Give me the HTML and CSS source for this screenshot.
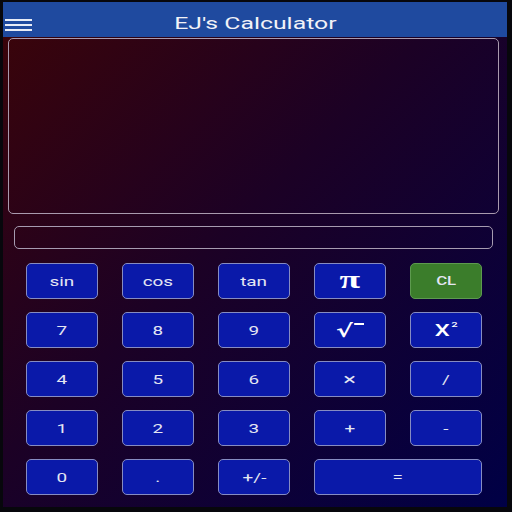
FILE: index.html
```html
<!DOCTYPE html>
<html lang="en">
<head>
  <meta charset="UTF-8">
  <meta name="viewport" content="width=device-width, initial-scale=1.0">
  <title>EJ's Calculator</title>
  <link rel="stylesheet" href="styles.css">
</head>
<body>
  <div class="app">
    <header class="topbar">
      <span class="menu"><i></i><i></i><i></i></span>
      <h1><span>EJ's Calculator</span></h1>
    </header>

    <div class="screen"></div>
    <div class="entry"></div>

    <div class="keys">
      <button><span>sin</span></button>
      <button><span>cos</span></button>
      <button><span>tan</span></button>
      <button class="pi"><span>&pi;</span></button>
      <button class="clear"><span>CL</span></button>

      <button><span>7</span></button>
      <button><span>8</span></button>
      <button><span>9</span></button>
      <button class="root"><span>&radic;<b></b></span></button>
      <button class="sq"><span>X<sup>2</sup></span></button>

      <button><span>4</span></button>
      <button><span>5</span></button>
      <button><span>6</span></button>
      <button class="times"><span>&times;</span></button>
      <button><span>/</span></button>

      <button><span>1</span></button>
      <button><span>2</span></button>
      <button><span>3</span></button>
      <button><span>+</span></button>
      <button><span>-</span></button>

      <button><span>0</span></button>
      <button><span>.</span></button>
      <button><span>+/-</span></button>
      <button class="equals"><span>=</span></button>
    </div>
  </div>
</body>
</html>
```

FILE: styles.css
```css
html, body {
  margin: 0;
  padding: 0;
  background: #07070c;
}
body {
  width: 512px;
  height: 512px;
  font-family: Roboto, 'Liberation Sans', sans-serif;
  overflow: hidden;
}
.app {
  margin: 2px 0 0 3px;
  width: 504px;
  height: 505px;
  background: linear-gradient(135deg, #3c0408 0%, #1c0125 45%, #000046 100%);
}
.topbar {
  height: 35px;
  background: #1f4a9f;
  display: flex;
  align-items: center;
  position: relative;
}
.topbar h1 {
  flex: 1;
  margin: 0;
  padding-top: 8px;
  text-align: center;
  color: #f2f2f7;
  font-size: 16px;
  font-weight: 400;
}
.topbar h1 span {
  display: inline-block;
  transform: scaleX(1.55);
}
.menu {
  position: absolute;
  left: 2px;
  top: 17px;
  display: flex;
  flex-direction: column;
  gap: 3.3px;
}
.menu i {
  display: block;
  width: 27px;
  height: 1.7px;
  background: #e8ecf6;
}
.screen {
  margin: 1px 8px 0 5px;
  height: 174px;
  border: 1.5px solid #a99aae;
  border-radius: 5px;
}
.entry {
  margin: 12px 14px 0 11px;
  height: 21px;
  border: 1.5px solid #a69bb0;
  border-radius: 5px;
}
.keys {
  margin: 14px 0 0 23px;
  display: grid;
  grid-template-columns: repeat(5, 72px);
  grid-auto-rows: 36px;
  column-gap: 24px;
  row-gap: 13px;
}
.keys button {
  background: #0a19a9;
  border: 1.2px solid #868cc2;
  border-radius: 5px;
  color: #e4e6f2;
  font-family: Roboto, 'Liberation Sans', sans-serif;
  font-size: 13.5px;
  font-weight: 400;
  padding: 0;
  margin: 0;
  display: flex;
  align-items: center;
  justify-content: center;
}
.keys button span {
  display: inline-block;
  transform: scaleX(1.4);
}
.keys .clear {
  background: #3b7d2b;
  border-color: #5d9a4f;
  font-size: 12px;
  font-weight: 500;
}
.keys .pi {
  font-family: 'Liberation Serif', serif;
  font-size: 25px;
  font-weight: 700;
  color: #ffffff;
  padding-bottom: 2px;
}
.keys .pi span {
  transform: scaleX(1.5);
}
.keys .root {
  font-family: 'DejaVu Sans', sans-serif;
  font-size: 18px;
  font-weight: 700;
  color: #ffffff;
}
.root b {
  display: inline-block;
  vertical-align: top;
  width: 7px;
  height: 2px;
  margin: 3px 0 0 1px;
  background: #ffffff;
}
.keys .sq {
  font-size: 17px;
  font-weight: 500;
  color: #ffffff;
}
.sq sup {
  font-size: 8px;
  margin-left: 1px;
  position: relative;
  top: -2px;
}
.keys .times {
  font-size: 17px;
}
.keys .equals {
  grid-column: span 2;
}
```
